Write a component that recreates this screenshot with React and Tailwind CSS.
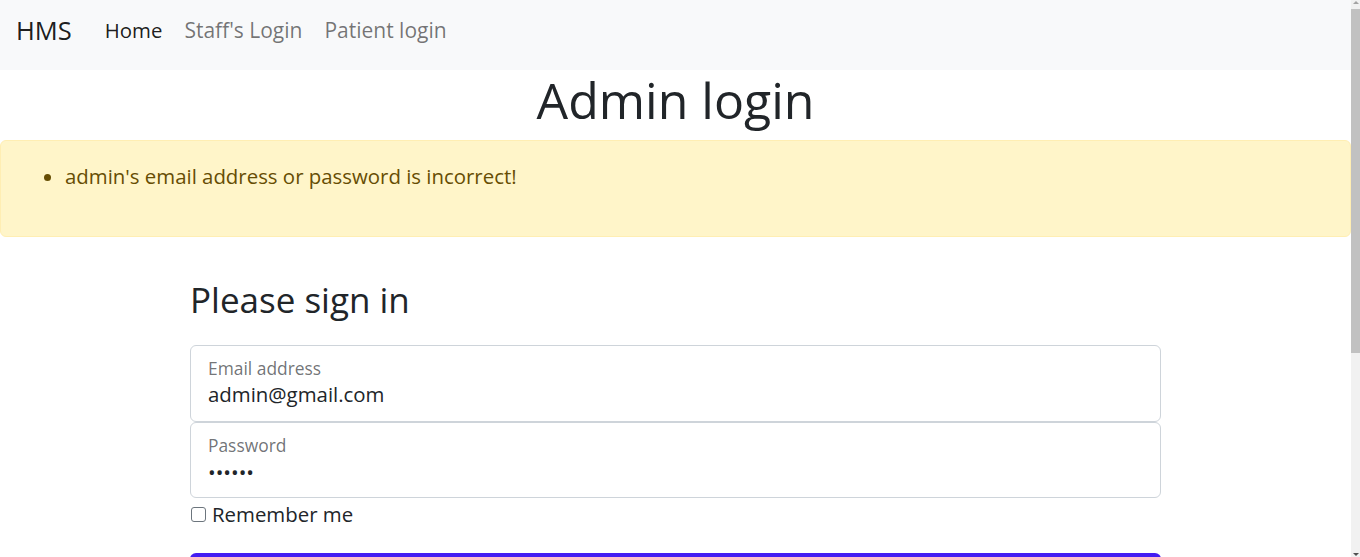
import React from "react";

export default function App() {
  return (
    <div className="flex h-[557px] w-full overflow-hidden bg-white">
      <div className="flex-1 min-w-0 font-['Open_Sans',sans-serif] text-[#212529]">
        <nav className="flex h-[70px] items-start bg-[#f8f9fa] px-[16px] pt-[15px]">
          <span className="mr-[22px] text-[25.5px] leading-[30px] text-[rgba(0,0,0,0.9)]">HMS</span>
          <span className="px-[11px] text-[20.4px] leading-[30px] text-[rgba(0,0,0,0.9)]">Home</span>
          <span className="px-[11px] text-[21px] leading-[30px] text-[rgba(0,0,0,0.55)]">Staff's Login</span>
          <span className="px-[11px] text-[21px] leading-[30px] text-[rgba(0,0,0,0.55)]">Patient login</span>
        </nav>
        <h1 className="mb-[10px] text-center text-[50px] font-medium leading-[60px]">Admin login</h1>
        <div className="h-[97px] rounded-[6px] border border-[#ffeeb3] bg-[#fff5c9] px-[20px] pt-[20px] text-[#664d03]">
          <ul className="list-disc pl-[44px]">
            <li className="text-[20.4px] leading-[30px]">admin's email address or password is incorrect!</li>
          </ul>
        </div>
        <div className="mx-auto w-[971px]">
          <h3 className="mt-[42px] mb-[24px] text-[35px] font-normal leading-[42px]">Please sign in</h3>
          <div className="flex h-[77px] flex-col rounded-[6px] border border-[#ced4da] px-[17px] pt-[10px]">
            <span className="text-[17.4px] leading-[24px] text-[rgba(33,37,41,0.65)]">Email address</span>
            <span className="text-[20.4px] leading-[28px]">admin@gmail.com</span>
          </div>
          <div className="flex h-[76px] flex-col rounded-[6px] border border-[#ced4da] px-[17px] pt-[10px]">
            <span className="text-[17.4px] leading-[24px] text-[rgba(33,37,41,0.65)]">Password</span>
            <span className="mt-[1px] text-[20.4px] leading-[28px]">••••••</span>
          </div>
          <div className="mt-[1px] flex h-[30px] items-center">
            <span className="ml-[1px] mr-[6px] h-[15px] w-[15px] rounded-[3px] border border-[#6c757d] bg-white" />
            <span className="text-[20.4px] leading-[30px]">Remember me</span>
          </div>
          <div className="mt-[24px] h-[60px] rounded-[6px] bg-[#441cf2]" />
        </div>
      </div>
      <div className="flex w-[9px] shrink-0 flex-col bg-[#f1f1f1]">
        <div className="flex h-[9px] items-start justify-center">
          <div className="mt-[1px] h-0 w-0 border-x-[3px] border-b-[3px] border-x-transparent border-b-[#a3a3a3]" />
        </div>
        <div className="h-[344px] w-full bg-[#c1c1c1]" />
        <div className="flex-1" />
        <div className="flex h-[9px] items-end justify-center">
          <div className="mb-[1px] h-0 w-0 border-x-[3px] border-t-[3px] border-x-transparent border-t-[#505050]" />
        </div>
      </div>
    </div>
  );
}
